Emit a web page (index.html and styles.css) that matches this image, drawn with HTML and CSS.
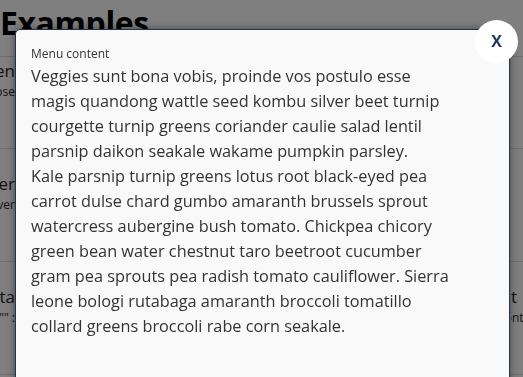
FILE: index.html
```html
<!DOCTYPE html>
<html lang="en">
<head>
<meta charset="utf-8">
<title>Examples</title>
<link rel="stylesheet" href="styles.css">
</head>
<body>
<div class="page">
  <h1 class="title">Examples</h1>
  <div class="table">
    <div class="row row-first">
      <div class="cell-left"><span class="main">Open</span><span class="sub">Close</span></div>
      <div class="cell-right"></div>
    </div>
    <div class="row">
      <div class="cell-left"><span class="main">Hover</span><span class="sub">Cover</span></div>
      <div class="cell-right"></div>
    </div>
    <div class="row">
      <div class="cell-left"><span class="main">Data</span><span class="sub">"" :</span></div>
      <div class="cell-right"><span class="main">t</span><span class="sub">cont</span></div>
    </div>
  </div>
</div>

<div class="overlay">
  <div class="modal">
    <button class="close" type="button">X</button>
    <div class="menu-label">Menu content</div>
    <p class="menu-text">Veggies sunt bona vobis, proinde vos postulo esse<br>
magis quandong wattle seed kombu silver beet turnip<br>
courgette turnip greens coriander caulie salad lentil<br>
parsnip daikon seakale wakame pumpkin parsley.<br>
Kale parsnip turnip greens lotus root black-eyed pea<br>
carrot dulse chard gumbo amaranth brussels sprout<br>
watercress aubergine bush tomato. Chickpea chicory<br>
green bean water chestnut taro beetroot cucumber<br>
gram pea sprouts pea radish tomato cauliflower. Sierra<br>
leone bologi rutabaga amaranth broccoli tomatillo<br>
collard greens broccoli rabe corn seakale.</p>
  </div>
</div>
</body>
</html>
```

FILE: styles.css
```css
* { box-sizing: border-box; }

html, body {
  margin: 0;
  padding: 0;
  height: 100%;
  overflow: hidden;
  background: #ffffff;
  font-family: "Open Sans", "Noto Sans", sans-serif;
  color: #212529;
}

.page {
  width: 523px;
}

.title {
  margin: 0;
  height: 57px;
  font-size: 32px;
  line-height: 46px;
  font-weight: 700;
  color: #000;
  letter-spacing: -0.4px;
  border-bottom: 1px solid #dcdcdc;
}

.table {
  display: flex;
  flex-direction: column;
}

.row {
  display: flex;
  justify-content: space-between;
  height: 113px;
  border-bottom: 1px solid #dcdcdc;
}

.row-first {
  height: 92px;
}

.cell-left {
  width: 15px;
  overflow: hidden;
  display: flex;
  flex-direction: column;
  align-items: flex-end;
  padding-top: 24px;
  white-space: nowrap;
}

.row-first .cell-left {
  padding-top: 3px;
}

.cell-right {
  width: 12px;
  overflow: hidden;
  display: flex;
  flex-direction: column;
  align-items: flex-start;
  padding-top: 24px;
  white-space: nowrap;
}

.main {
  font-size: 17px;
  line-height: 22px;
}

.sub {
  font-size: 12px;
  line-height: 20px;
}

.cell-right .sub {
  margin-left: -12px;
}

.overlay {
  position: fixed;
  inset: 0;
  background: rgba(0, 0, 0, 0.5);
}

.modal {
  position: absolute;
  left: 15px;
  top: 29px;
  width: 495px;
  bottom: -30px;
  background: #f9f9f9;
  border: 1px solid #22344a;
  border-radius: 5px;
  box-shadow: 0 0 8px rgba(0, 0, 0, 0.45);
  padding: 15px 15px;
  color: #333333;
}

.close {
  position: absolute;
  top: -10px;
  right: -9px;
  width: 43px;
  height: 43px;
  border: none;
  border-radius: 50%;
  background: #ffffff;
  color: #1d3a5c;
  font-family: "Open Sans", sans-serif;
  font-weight: 700;
  font-size: 16px;
  line-height: 43px;
  padding: 0;
  text-align: center;
}

.menu-label {
  font-size: 12px;
  line-height: 18px;
}

.menu-text {
  margin: 1px 0 0;
  font-size: 16.3px;
  line-height: 25px;
  white-space: nowrap;
}
```
